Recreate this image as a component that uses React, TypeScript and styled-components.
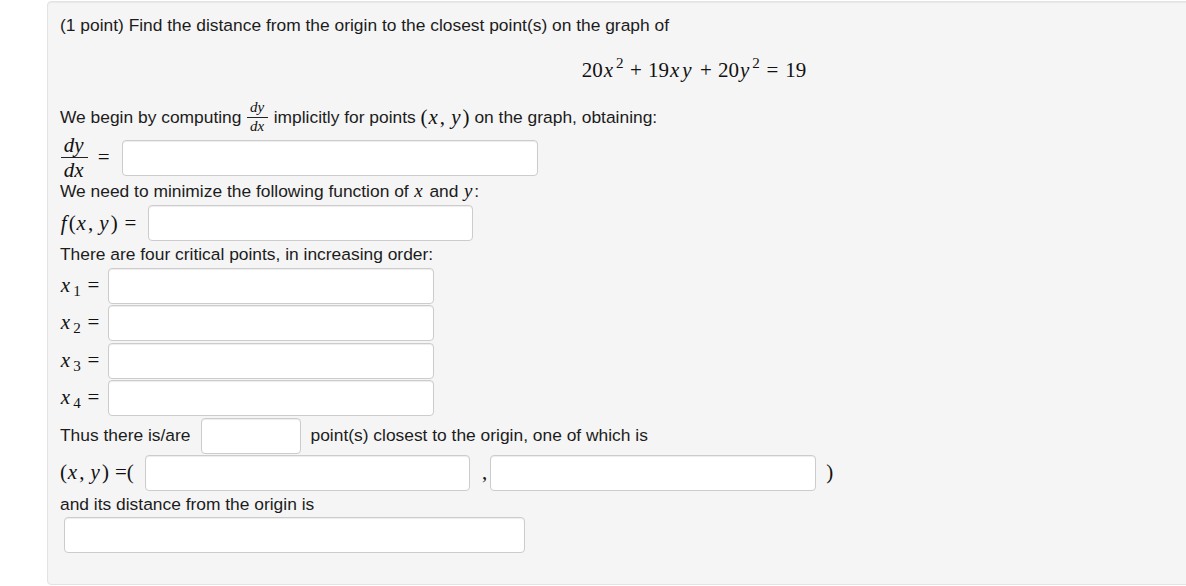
import { createGlobalStyle, styled } from "styled-components";

const GlobalStyle = createGlobalStyle`
  html, body {
    margin: 0;
    padding: 0;
    background: #ffffff;
    overflow: hidden;
  }
  body {
    font-family: "Liberation Sans", Arial, sans-serif;
    font-size: 17.4px;
    color: #1c1c1c;
  }
`;

const Page = styled.div`
  padding: 1px 0 0 47px;
  width: 1400px;
`;

const Panel = styled.div`
  box-sizing: border-box;
  width: 1294px;
  height: 584px;
  padding: 13px 12px 0 12px;
  background: #f5f5f5;
  border: 1px solid #e3e3e3;
  border-radius: 4px;
  box-shadow: inset 0 1px 1px rgba(0, 0, 0, 0.05);
`;

const Line = styled.div<{ $top?: number }>`
  line-height: 20px;
  height: 20px;
  margin-top: ${(p) => p.$top ?? 0}px;
  display: flex;
  align-items: center;
  white-space: nowrap;
`;

const Display = styled.div`
  margin-top: 20px;
  height: 30px;
  display: flex;
  align-items: center;
  justify-content: center;
`;

const Row = styled.div<{ $top?: number; $h?: number }>`
  display: flex;
  align-items: center;
  height: ${(p) => p.$h ?? 37}px;
  margin-top: ${(p) => p.$top ?? 0}px;
  white-space: nowrap;
`;

const Math = styled.span<{ $size?: number }>`
  font-family: "Liberation Serif", "Times New Roman", serif;
  font-size: ${(p) => p.$size ?? 21}px;
  color: #111111;
  white-space: nowrap;
  display: inline-flex;
  align-items: baseline;
`;

const Label = styled(Math)<{ $w: number }>`
  width: ${(p) => p.$w}px;
  flex: none;
`;

const V = styled.i`
  font-style: italic;
  padding: 0 0.1em 0 0.04em;
`;

const Sup = styled.span`
  font-size: 0.72em;
  position: relative;
  top: -0.55em;
  padding-left: 1px;
`;

const Sub = styled.span`
  font-size: 0.72em;
  position: relative;
  top: 0.25em;
  padding-left: 1px;
`;

const Op = styled.span<{ $rel?: boolean }>`
  margin: 0 ${(p) => (p.$rel ? 0.32 : 0.3)}em;
`;

const Frac = styled.span<{ $size: number }>`
  display: inline-flex;
  flex-direction: column;
  align-items: center;
  font-family: "Liberation Serif", "Times New Roman", serif;
  font-size: ${(p) => p.$size}px;
  line-height: 1.05;
  margin: 0 6px;
  color: #111111;
`;

const Num = styled.span`
  padding: 0 2px 1px;
  border-bottom: 1px solid #222222;
`;

const Den = styled.span`
  padding: 1px 2px 0;
`;

const Answer = styled.input<{ $w: number; $ml?: number; $mr?: number }>`
  box-sizing: border-box;
  flex: none;
  width: ${(p) => p.$w}px;
  height: 36px;
  margin: 0 ${(p) => p.$mr ?? 0}px 0 ${(p) => p.$ml ?? 0}px;
  padding: 4px 6px;
  background: #ffffff;
  border: 1px solid #cccccc;
  border-radius: 4px;
  box-shadow: inset 0 1px 1px rgba(0, 0, 0, 0.075);
  font-size: 14px;
  outline: none;
`;

const Text = styled.span`
  flex: none;
`;

function XSub({ n }: { n: number }) {
  return (
    <Label $w={48}>
      <V>x</V>
      <Sub>{n}</Sub>
      <Op $rel>=</Op>
    </Label>
  );
}

export default function App() {
  return (
    <Page>
      <GlobalStyle />
      <Panel>
        <Line>
          (1 point) Find the distance from the origin to the closest point(s)
          on the graph of
        </Line>
        <Display>
          <Math $size={21}>
            20<V>x</V>
            <Sup>2</Sup>
            <Op>+</Op>19<V>x</V>
            <V>y</V>
            <Op>+</Op>20<V>y</V>
            <Sup>2</Sup>
            <Op $rel>=</Op>19
          </Math>
        </Display>
        <Line $top={22}>
          We begin by computing
          <Frac $size={15}>
            <Num>
              <V>dy</V>
            </Num>
            <Den>
              <V>dx</V>
            </Den>
          </Frac>
          implicitly for points&nbsp;
          <Math>
            (<V>x</V>,&nbsp;<V>y</V>)
          </Math>
          &nbsp;on the graph, obtaining:
        </Line>
        <Row $h={45} $top={8}>
          <Label $w={62}>
            <Frac $size={21} style={{ margin: "0 0 0 1px" }}>
              <Num>
                <V>dy</V>
              </Num>
              <Den>
                <V>dx</V>
              </Den>
            </Frac>
            <Op $rel style={{ margin: "0 0 0 10px", alignSelf: "center" }}>
              =
            </Op>
          </Label>
          <Answer $w={416} />
        </Row>
        <Line $top={1}>
          We need to minimize the following function of&nbsp;
          <Math $size={19}>
            <V>x</V>
          </Math>
          &nbsp;and&nbsp;
          <Math $size={19}>
            <V>y</V>
          </Math>
          :
        </Line>
        <Row $h={42} $top={1}>
          <Label $w={88}>
            <V>f</V>(<V>x</V>,&nbsp;<V>y</V>)<Op $rel>=</Op>
          </Label>
          <Answer $w={325} />
        </Row>
        <Line>There are four critical points, in increasing order:</Line>
        <Row $top={3}>
          <XSub n={1} />
          <Answer $w={326} />
        </Row>
        <Row>
          <XSub n={2} />
          <Answer $w={326} />
        </Row>
        <Row $top={1}>
          <XSub n={3} />
          <Answer $w={326} />
        </Row>
        <Row>
          <XSub n={4} />
          <Answer $w={326} />
        </Row>
        <Row $top={1}>
          <Text>Thus there is/are</Text>
          <Answer $w={100} $ml={10} $mr={10} />
          <Text>point(s) closest to the origin, one of which is</Text>
        </Row>
        <Row>
          <Label $w={85}>
            (<V>x</V>,&nbsp;<V>y</V>)
            <Op $rel style={{ margin: "0 0 0 6px" }}>
              =
            </Op>
            (
          </Label>
          <Answer $w={325} />
          <Math style={{ margin: "0 3px 0 12px" }}>,</Math>
          <Answer $w={326} />
          <Math style={{ marginLeft: 10 }}>)</Math>
        </Row>
        <Line $top={3}>and its distance from the origin is</Line>
        <Row $h={40} $top={1}>
          <Answer $w={461} $ml={4} />
        </Row>
      </Panel>
    </Page>
  );
}
